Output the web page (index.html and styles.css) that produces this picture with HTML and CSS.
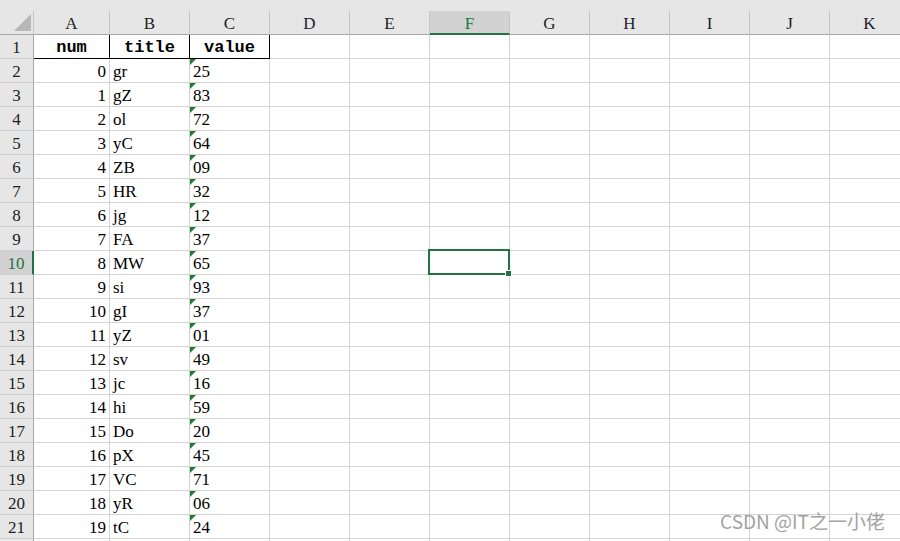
FILE: index.html
```html
<!DOCTYPE html>
<html lang="en">
<head>
    <meta charset="UTF-8">
    <meta name="viewport" content="width=device-width, initial-scale=1.0">
    <title>Sheet1</title>
    <link rel="stylesheet" href="styles.css">
</head>
<body>
    <div class="strip"></div>
    <div class="sheet" id="sheet">
        <div class="corner"><span class="corner-mark"></span></div>
        <div class="col-head">A</div>
        <div class="col-head">B</div>
        <div class="col-head">C</div>
        <div class="col-head">D</div>
        <div class="col-head">E</div>
        <div class="col-head active">F</div>
        <div class="col-head">G</div>
        <div class="col-head">H</div>
        <div class="col-head">I</div>
        <div class="col-head">J</div>
        <div class="col-head">K</div>
    </div>
    <div class="selection"><span class="handle"></span></div>
    <div class="watermark">CSDN @IT之一小佬</div>

    <script>
        // rows of the sheet: num, title, value (value stored as text)
        const data = [
            [0, 'gr', '25'], [1, 'gZ', '83'], [2, 'ol', '72'], [3, 'yC', '64'],
            [4, 'ZB', '09'], [5, 'HR', '32'], [6, 'jg', '12'], [7, 'FA', '37'],
            [8, 'MW', '65'], [9, 'si', '93'], [10, 'gI', '37'], [11, 'yZ', '01'],
            [12, 'sv', '49'], [13, 'jc', '16'], [14, 'hi', '59'], [15, 'Do', '20'],
            [16, 'pX', '45'], [17, 'VC', '71'], [18, 'yR', '06'], [19, 'tC', '24']
        ];

        const sheet = document.getElementById('sheet');

        function addRow(n, cells, rowClass) {
            const head = document.createElement('div');
            head.className = 'row-head' + (n === 10 ? ' active' : '');
            head.textContent = n;
            sheet.appendChild(head);
            for (let i = 0; i < 11; i++) {
                const cell = document.createElement('div');
                cell.className = 'cell' + (rowClass ? ' ' + rowClass : '');
                if (cells[i]) {
                    cell.className += ' ' + cells[i].cls;
                    cell.textContent = cells[i].text;
                }
                sheet.appendChild(cell);
            }
        }

        addRow(1, [
            { text: 'num', cls: 'title' },
            { text: 'title', cls: 'title' },
            { text: 'value', cls: 'title' }
        ], 'first');

        data.forEach(function(row, i) {
            addRow(i + 2, [
                { text: row[0], cls: 'num' },
                { text: row[1], cls: 'text' },
                { text: row[2], cls: 'text flag' }
            ]);
        });

        // last row is only partly in view, its label is left out
        addRow('', []);
    </script>
</body>
</html>
```

FILE: styles.css
```css
body {
    margin: 0;
    background-color: #fff;
    font-family: "Liberation Serif", serif;
    font-size: 17px;
    color: #000;
    overflow: hidden;
    height: 541px;
    position: relative;
}

.strip {
    height: 11px;
    background-color: #e6e6e6;
}

.sheet {
    display: grid;
    grid-template-columns: 34px 76px repeat(10, 80px);
    grid-auto-rows: 24px;
    width: 910px;
}

.sheet > div {
    box-sizing: border-box;
    border-right: 1px solid #d4d4d4;
    border-bottom: 1px solid #d4d4d4;
    white-space: nowrap;
    overflow: hidden;
}

.corner {
    background-color: #e6e6e6;
    display: flex;
    align-items: flex-end;
    justify-content: flex-end;
    padding: 0 2px 3px 0;
}

.sheet > .corner,
.sheet > .col-head {
    border-right-color: #c6c6c6;
    border-bottom-color: #a9a9a9;
}

.corner-mark {
    width: 0;
    height: 0;
    border-left: 17px solid transparent;
    border-bottom: 17px solid #b8b8b8;
}

.col-head {
    background-color: #e6e6e6;
    text-align: center;
    line-height: 22px;
    padding-top: 2px;
    color: #222;
}

.sheet > .col-head.active {
    background-color: #d2d2d2;
    color: #217346;
    border-bottom: 2px solid #217346;
}

.row-head {
    background-color: #e6e6e6;
    text-align: center;
    line-height: 22px;
    padding-top: 2px;
    color: #222;
}

.sheet > .row-head {
    border-right-color: #a9a9a9;
    border-bottom-color: #cfcfcf;
}

.sheet > .row-head.active {
    background-color: #d2d2d2;
    color: #217346;
    border-right: 2px solid #217346;
}

.cell {
    line-height: 22px;
    padding: 2px 3px 0;
}

.title {
    font-family: "Liberation Mono", monospace;
    font-weight: bold;
    font-size: 17px;
    text-align: center;
}

.sheet > .first.title {
    border-right-color: #000;
    border-bottom-color: #000;
}

.num {
    text-align: right;
}

.flag {
    position: relative;
}

.flag::before {
    content: "";
    position: absolute;
    top: 0;
    left: 0;
    border-top: 6px solid #1e7d32;
    border-right: 6px solid transparent;
}

.selection {
    position: absolute;
    left: 428px;
    top: 249px;
    width: 78px;
    height: 22px;
    border: 2px solid #217346;
}

.handle {
    position: absolute;
    right: -4px;
    bottom: -4px;
    width: 5px;
    height: 5px;
    background-color: #217346;
    border: 1px solid #fff;
}

.watermark {
    position: absolute;
    right: 15px;
    top: 507px;
    font-family: "Noto Sans CJK SC", sans-serif;
    font-size: 19px;
    color: #a3a3a3;
}
```
